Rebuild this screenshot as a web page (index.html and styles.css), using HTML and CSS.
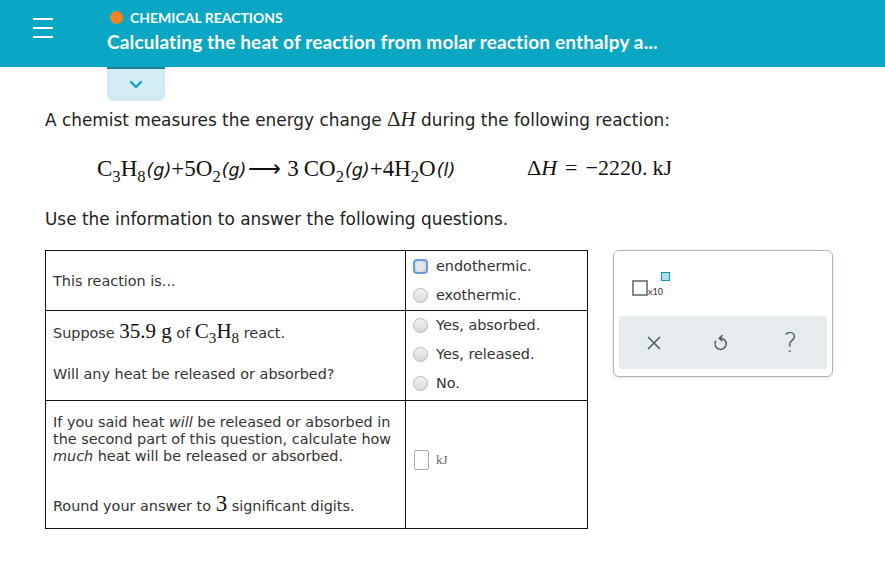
FILE: index.html
```html
<!DOCTYPE html>
<html>
<head>
<meta charset="utf-8">
<link rel="stylesheet" href="styles.css">
</head>
<body>
<header class="topbar">
  <div class="menu">
    <span></span><span></span><span></span>
  </div>
  <div class="titles">
    <div class="category"><span class="dot"></span>CHEMICAL REACTIONS</div>
    <div class="title">Calculating the heat of reaction from molar reaction enthalpy a...</div>
  </div>
</header>
<div class="tabrow">
  <div class="tab">
    <svg width="14" height="9" viewBox="0 0 14 9"><path d="M2 2 L7 7 L12 2" fill="none" stroke="#1a9fbb" stroke-width="2.4" stroke-linecap="round" stroke-linejoin="round"/></svg>
  </div>
</div>
<main class="content">
  <p class="lead">A chemist measures the energy change <span class="m">Δ<i>H</i></span> during the following reaction:</p>
  <div class="equation">
    <div class="eq-left">C<sub>3</sub>H<sub>8</sub><span class="ph">(g)</span>+5O<sub>2</sub><span class="ph">(g)</span><span class="arrow">⟶</span> 3<span class="sp"></span>CO<sub>2</sub><span class="ph">(g)</span>+4H<sub>2</sub>O<span class="ph">(l)</span></div>
    <div class="eq-right">Δ<i>H</i><span class="eqs">=</span>−2220.<span class="sp"></span>kJ</div>
  </div>
  <p class="lead second">Use the information to answer the following questions.</p>
  <div class="work">
    <table class="qtable">
      <tr class="r1">
        <td class="q">This reaction is...</td>
        <td class="a">
          <div class="opt"><span class="radio focus"></span>endothermic.</div>
          <div class="opt"><span class="radio"></span>exothermic.</div>
        </td>
      </tr>
      <tr class="r2">
        <td class="q">
          <div class="suppose">Suppose <span class="serif">35.9 g</span> of <span class="serif">C<sub>3</sub>H<sub>8</sub></span> react.</div>
          <div class="will">Will any heat be released or absorbed?</div>
        </td>
        <td class="a">
          <div class="opt"><span class="radio"></span>Yes, absorbed.</div>
          <div class="opt"><span class="radio"></span>Yes, released.</div>
          <div class="opt"><span class="radio"></span>No.</div>
        </td>
      </tr>
      <tr class="r3">
        <td class="q">
          <div class="ifyou">If you said heat <i>will</i> be released or absorbed in<br>the second part of this question, calculate how<br><i>much</i> heat will be released or absorbed.</div>
          <div class="round">Round your answer to <span class="serif big">3</span> significant digits.</div>
        </td>
        <td class="a">
          <div class="ans"><span class="box"></span><span class="unit">kJ</span></div>
        </td>
      </tr>
    </table>
    <div class="panel">
      <div class="sci">
        <span class="sbox"></span><span class="x10">x10</span><span class="exp"></span>
      </div>
      <div class="tools">
        <svg class="ic" width="16" height="16" viewBox="0 0 16 16"><path d="M2 2 L14 14 M14 2 L2 14" stroke="#4a5a62" stroke-width="1.5" fill="none"/></svg>
        <svg class="ic" width="16" height="18" viewBox="0 0 16 18"><path d="M3.6 7.2 A5.6 5.6 0 1 0 8 4.2" stroke="#4a5a62" stroke-width="1.5" fill="none" stroke-linecap="round"/><path d="M10 1.6 L7.2 4.2 L10 6.6" stroke="#4a5a62" stroke-width="1.5" fill="none" stroke-linecap="round" stroke-linejoin="round"/></svg>
        <span class="help">?</span>
      </div>
    </div>
  </div>
</main>
</body>
</html>
```

FILE: styles.css
```css
* { box-sizing: border-box; }
body {
  margin: 0;
  background: #fff;
  font-family: "DejaVu Sans", Verdana, sans-serif;
  color: #222;
}
.topbar {
  height: 67px;
  background: #0aa7c4;
  display: flex;
  align-items: flex-start;
  color: #fff;
}
.menu {
  width: 107px;
  padding: 18px 0 0 33px;
  display: flex;
  flex-direction: column;
  gap: 7px;
}
.menu span {
  display: block;
  width: 20px;
  height: 2px;
  background: #fff;
}
.titles {
  padding-top: 8px;
}
.category {
  display: flex;
  align-items: center;
  font-family: "Lato", sans-serif;
  font-weight: 700;
  font-size: 14px;
  height: 18px;
  letter-spacing: 0;
}
.dot {
  width: 13px;
  height: 13px;
  border-radius: 50%;
  background: #f5821f;
  margin: 0 7px 0 3px;
}
.title {
  font-family: "Lato", sans-serif;
  font-weight: 700;
  font-size: 19px;
  margin-top: 4px;
  letter-spacing: 0.15px;
}
.tabrow {
  padding-left: 107px;
}
.tab {
  width: 58px;
  height: 34px;
  background: #d3ecf3;
  border-top: 2px solid #1d7f95;
  border-radius: 0 0 6px 6px;
  display: flex;
  align-items: center;
  justify-content: center;
  padding-bottom: 2px;
}
.content {
  padding: 0 0 0 45px;
}
.lead {
  margin: 8px 0 0;
  font-size: 16.9px;
  line-height: 20px;
  color: #222;
}
.lead .m {
  font-family: "Liberation Serif", serif;
  font-size: 21px;
}
.second { margin-top: 26px; }
.equation {
  display: flex;
  align-items: center;
  height: 30px;
  margin-top: 23px;
  font-family: "Liberation Serif", serif;
  font-size: 23px;
  color: #111;
}
.eq-left {
  padding-left: 52px;
  width: 482px;
}
.eq-right { font-size: 22px; }
.eq-left sub, .serif sub {
  font-size: 0.72em;
  vertical-align: -0.35em;
  line-height: 0;
}
.ph {
  font-family: "DejaVu Sans", sans-serif;
  font-style: italic;
  font-size: 17.5px;
  padding-left: 1px;
}
.arrow { margin-left: 2px; }
.sp { display: inline-block; width: 5px; }
.eqs { margin: 0 8px; }
.work {
  display: flex;
  align-items: flex-start;
  gap: 25px;
  margin-top: 21px;
}
.qtable {
  border-collapse: collapse;
  width: 543px;
  font-size: 14.4px;
  color: #333;
}
.qtable td {
  border: 1px solid #111;
  padding: 0 4px 0 7px;
  vertical-align: top;
}
.qtable td.q { width: 360px; }
.r1 { height: 60px; }
.r2 { height: 90px; }
.r3 { height: 128px; }
.r1 .q { vertical-align: middle; }
.qtable td.a { padding: 0 0 0 7px; }
.opt {
  display: flex;
  align-items: center;
  height: 29px;
  line-height: 29px;
}
.r1 .a .opt:first-child { margin-top: 1px; }
.r2 .a { padding-top: 1px; }
.radio {
  width: 15px;
  height: 15px;
  border-radius: 50%;
  border: 1px solid #b9b9b9;
  background: linear-gradient(#f2f2f2, #d8d8d8);
  margin-right: 8px;
  flex: none;
}
.radio.focus {
  border-radius: 4px;
  border: 2px solid #6e9be0;
  background: radial-gradient(circle, #e6e6e6 55%, #cfd8e8 70%);
}
.serif {
  font-family: "Liberation Serif", serif;
  font-size: 21px;
  color: #111;
}
.suppose { margin-top: 7px; line-height: 26px; white-space: nowrap; }
.will { margin-top: 20px; }
.ifyou { margin-top: 13px; line-height: 17px; white-space: nowrap; }
.round { margin-top: 26px; }
.big { font-size: 23px; }
.ans {
  display: flex;
  align-items: center;
  margin-top: 49px;
}
.box {
  width: 15px;
  height: 20px;
  border: 1px solid #aaa;
  border-radius: 2px;
  margin-right: 7px;
  margin-left: 1px;
}
.unit {
  font-family: "Liberation Serif", serif;
  font-size: 13px;
  color: #666;
}
.panel {
  width: 220px;
  height: 127px;
  border: 1px solid #a9b6bb;
  border-radius: 6px;
  box-shadow: 0 1px 3px rgba(0,0,0,0.12);
  padding: 0 5px 7px;
  display: flex;
  flex-direction: column;
}
.sci {
  height: 65px;
  display: flex;
  align-items: flex-start;
  padding: 21px 0 0 13px;
}
.sbox {
  width: 16px;
  height: 16px;
  border: 2px solid #7f8b90;
  margin-top: 8px;
}
.x10 {
  font-family: "Lato", sans-serif;
  font-size: 9px;
  color: #333;
  margin-top: 14px;
}
.exp {
  width: 9px;
  height: 9px;
  border: 1.5px solid #1796b2;
  background: #a9e0ee;
  margin-top: 0;
  margin-left: -2px;
}
.tools {
  flex: 1;
  background: #e6ebed;
  border-radius: 3px;
  display: grid;
  grid-template-columns: repeat(3, 1fr);
  align-items: center;
  justify-items: center;
  padding: 0 0 0 0;
}
.ic { display: block; }
.ic:nth-child(2) { margin-right: 6px; }
.help {
  font-family: "DejaVu Sans", sans-serif;
  font-size: 26px;
  color: #4a5a62;
  font-weight: 200;
  line-height: 1;
  margin-right: 4px;
}
```
